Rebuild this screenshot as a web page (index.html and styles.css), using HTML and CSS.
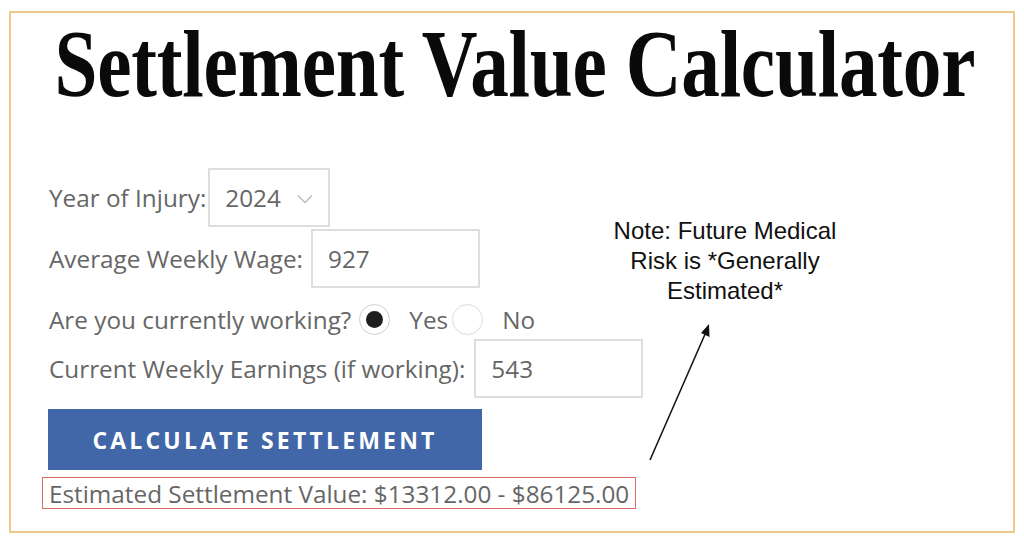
FILE: index.html
```html
<!DOCTYPE html>
<html lang="en">
<head>
<meta charset="utf-8">
<title>Settlement Value Calculator</title>
<link rel="stylesheet" href="styles.css">
</head>
<body>
<div class="frame">
  <h1 class="title"><span class="title-text">Settlement Value Calculator</span></h1>

  <form class="calc">
    <div class="row row-year">
      <label class="label">Year of Injury:</label>
      <div class="field select">
        <span class="value">2024</span>
        <svg class="chevron" width="16" height="10" viewBox="0 0 16 10"><path d="M1 1.5 L8 8.5 L15 1.5" fill="none" stroke="#b9b9b9" stroke-width="1.3"/></svg>
      </div>
    </div>
    <div class="row row-wage">
      <label class="label">Average Weekly Wage:</label>
      <div class="field input"><span class="value">927</span></div>
    </div>
    <div class="row row-radio">
      <span class="label">Are you currently working?</span>
      <span class="radio radio-yes checked"><span class="dot"></span></span>
      <span class="label opt-yes">Yes</span>
      <span class="radio radio-no"></span>
      <span class="label opt-no">No</span>
    </div>
    <div class="row row-earn">
      <label class="label">Current Weekly Earnings (if working):</label>
      <div class="field input"><span class="value">543</span></div>
    </div>
    <div class="btn">CALCULATE SETTLEMENT</div>
    <div class="result">Estimated Settlement Value: $13312.00 - $86125.00</div>
  </form>

  <p class="note">Note: Future Medical<br>Risk is *Generally<br>Estimated*</p>
  <svg class="arrow" width="80" height="150" viewBox="0 0 80 150">
    <line x1="12" y1="146" x2="68" y2="18" stroke="#111" stroke-width="1.6"/>
    <polygon points="71,10 71.5,23 63,19" fill="#111"/>
  </svg>
</div>
</body>
</html>
```

FILE: styles.css
```css
html, body {
  margin: 0;
  padding: 0;
  background: #ffffff;
}

.frame {
  position: relative;
  box-sizing: border-box;
  width: 1006px;
  height: 522px;
  margin: 11px 0 0 9px;
  border: 2px solid #ecca8e;
  background: #ffffff;
}

.title {
  display: flex;
  justify-content: center;
  margin: 0;
  padding-top: 1px;
  font-family: "Liberation Serif", "Times New Roman", serif;
  font-weight: bold;
  font-size: 96px;
  line-height: 100px;
  color: #0a0a0a;
  white-space: nowrap;
}

.title-text {
  display: inline-block;
  flex: none;
  transform: translateX(3px) scaleX(0.805);
  transform-origin: center;
  letter-spacing: -0.3px;
}

.calc {
  margin: 54px 0 0 38px;
  font-family: "Open Sans", "Liberation Sans", sans-serif;
  font-size: 24.3px;
  color: #666666;
}

.row {
  display: flex;
  align-items: center;
}

.label {
  white-space: nowrap;
}

.field {
  box-sizing: border-box;
  height: 59px;
  border: 2px solid #dedede;
  display: flex;
  align-items: center;
  padding-left: 15px;
  color: #666666;
}

.row-year .field {
  width: 122px;
  margin-left: 2px;
}

.row-year { margin-bottom: 2px; }

.chevron {
  margin-left: 16px;
  margin-top: 2px;
}

.row-wage .field {
  width: 169px;
  margin-left: 8px;
}

.row-radio {
  height: 30px;
  margin: 16px 0 5px;
}

.radio {
  box-sizing: border-box;
  width: 31px;
  height: 31px;
  border-radius: 50%;
  border: 1.5px solid #dcdcdc;
  display: flex;
  align-items: center;
  justify-content: center;
  background: #ffffff;
}

.radio-yes { margin-left: 8px; }

.radio.checked { border-color: #cfcfcf; }

.dot {
  width: 17px;
  height: 17px;
  border-radius: 50%;
  background: #1e1e1e;
}

.opt-yes { margin: 0 4px 0 19px; }
.opt-no { margin-left: 19px; }

.row-earn .field {
  width: 169px;
  margin-left: 9px;
}

.btn {
  box-sizing: border-box;
  width: 434px;
  height: 61px;
  margin: 11px 0 0 -1px;
  background: #4167a9;
  color: #ffffff;
  font-weight: bold;
  font-size: 23px;
  letter-spacing: 3.2px;
  display: flex;
  align-items: center;
  justify-content: center;
}

.result {
  box-sizing: border-box;
  width: 594px;
  height: 32px;
  margin: 7px 0 0 -7px;
  border: 1.5px solid #dc6e6a;
  padding-left: 6px;
  display: flex;
  align-items: center;
  white-space: nowrap;
}

.note {
  position: absolute;
  left: 598px;
  top: 203px;
  width: 232px;
  margin: 0;
  text-align: center;
  font-family: "Liberation Sans", Arial, sans-serif;
  font-size: 24px;
  line-height: 30px;
  color: #111111;
}

.arrow {
  position: absolute;
  left: 627px;
  top: 301px;
}
```
